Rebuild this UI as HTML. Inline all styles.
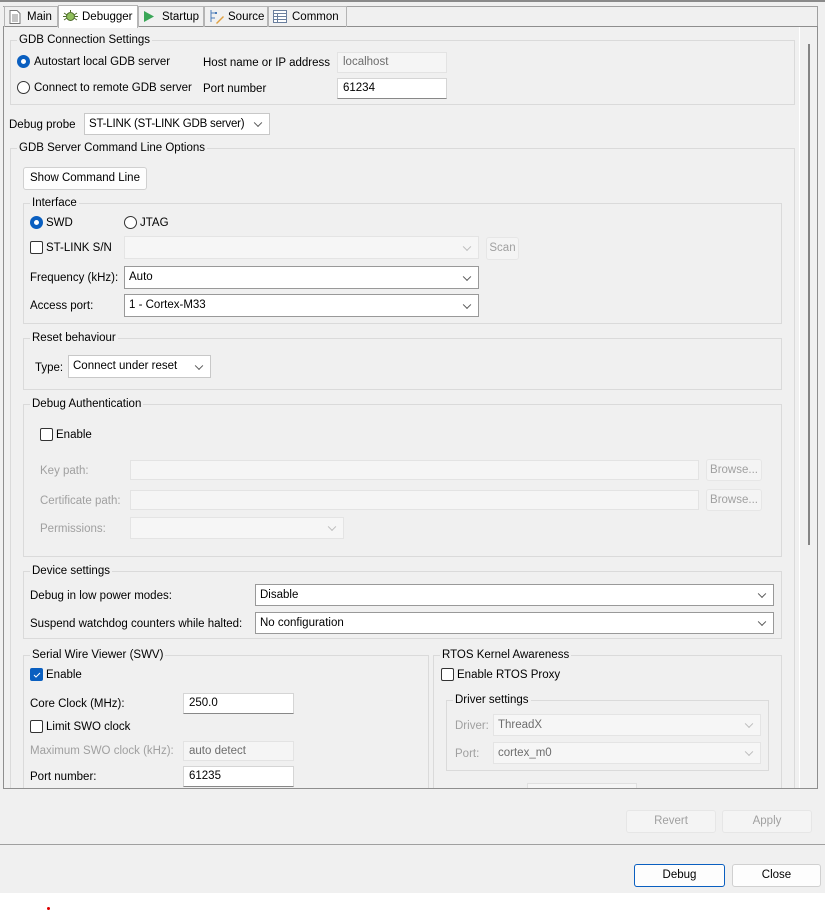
<!DOCTYPE html>
<html><head><meta charset="utf-8"><style>
*{box-sizing:border-box;margin:0;padding:0}
body{width:825px;height:913px;background:#fff;position:relative;overflow:hidden;font-family:"Liberation Sans",sans-serif;font-size:11.5px;color:#000}
.a{position:absolute}
.t{position:absolute;white-space:nowrap;line-height:14px}
.g{position:absolute;border:1px solid #dadada}
.gl{position:absolute;top:-9px;left:6px;background:#f0f0f0;padding:0 2px;line-height:16px;white-space:nowrap}
.in{position:absolute;background:#fff;border:1px solid #d5d5d5;border-bottom:1px solid #888;padding-left:5px;line-height:19px;white-space:nowrap}
.dis{background:#f5f5f5;border:1px solid #e3e3e3;color:#6d6d6d}
.sel{position:absolute;background:#fff;border:1px solid #c8c8c8;padding-left:4px;white-space:nowrap}
.sel:after{content:"";position:absolute;right:8px;top:50%;width:5px;height:5px;border-right:1px solid #555;border-bottom:1px solid #555;transform:translateY(-70%) rotate(45deg)}
.sd{background:#f6f6f6;border-color:#e4e4e4;color:#6d6d6d}
.sd:after{border-color:#bbb}
.btn{position:absolute;background:#fdfdfd;border:1px solid #d0d0d0;border-radius:3px;text-align:center;white-space:nowrap}
.bd{background:#f4f4f4;border-color:#e6e6e6;color:#a0a0a0}
.gray{color:#a0a0a0}
.rad{position:absolute;width:13px;height:13px;border-radius:50%;border:1px solid #333;background:#fff}
.rad.on{background:#fff;border:4px solid #0a5fc0}
.cb{position:absolute;width:13px;height:13px;border:1px solid #333;border-radius:2px;background:#fff}
.cb.on{background:#0a5fc0;border-color:#0a5fc0}
</style></head><body>
<div class="a" style="left:0;top:0;width:825px;height:893px;background:#f0f0f0"></div>
<div class="a" style="left:0;top:0;width:825px;height:2px;background:#8a8a8a"></div>
<div class="a" style="left:3px;top:6px;width:815px;height:21px;border:1px solid #a0a0a0;border-bottom:none;border-left:none"></div>
<div class="a" style="left:3px;top:26px;width:815px;height:763px;border:1px solid #8e8e8e"></div>
<div class="a" style="left:4px;top:6px;width:54px;height:21px;border:1px solid #b5b5b5;border-bottom:none"></div>
<div class="a" style="left:58px;top:5px;width:80px;height:23px;border:1px solid #b5b5b5;border-bottom:none;background:#fff"></div>
<div class="a" style="left:138px;top:6px;width:66px;height:21px;border:1px solid #b5b5b5;border-bottom:none"></div>
<div class="a" style="left:204px;top:6px;width:64px;height:21px;border:1px solid #b5b5b5;border-bottom:none"></div>
<div class="a" style="left:268px;top:6px;width:79px;height:21px;border:1px solid #b5b5b5;border-bottom:none"></div>
<svg class="a" style="left:9px;top:10px" width="12" height="14"><path d="M1 .5h7l3 3v10H1z" fill="#fff" stroke="#777"/><path d="M3 5h6M3 7h6M3 9h6M3 11h6" stroke="#888"/></svg>
<div class="t" style="left:27px;top:10px">Main</div>
<svg class="a" style="left:63px;top:9px" width="15" height="15"><circle cx="7.5" cy="7.5" r="4" fill="#8fbf5a" stroke="#4d6b2a"/><path d="M1 4l3 2M14 4l-3 2M1 11l3-2M14 11l-3-2M7.5 1v2M3 7.5H0M15 7.5h-3" stroke="#4d6b2a"/></svg>
<div class="t" style="left:82px;top:10px">Debugger</div>
<svg class="a" style="left:143px;top:10px" width="12" height="13"><path d="M1 1l10 5.5L1 12z" fill="#3aa657"/></svg>
<div class="t" style="left:162px;top:10px">Startup</div>
<svg class="a" style="left:209px;top:9px" width="16" height="16"><path d="M2 1v12M2 4h4M2 9h4" stroke="#4b7bb8"/><rect x="6" y="3" width="2" height="2" fill="#4b7bb8"/><path d="M7 14l7-7 1 1-7 7z" fill="#e0a040"/></svg>
<div class="t" style="left:228px;top:10px">Source</div>
<svg class="a" style="left:273px;top:10px" width="14" height="13"><rect x=".5" y=".5" width="13" height="12" fill="#fff" stroke="#6a7f9e"/><path d="M1 3.5h12M4.5 3v9M1 6.5h12M1 9.5h12" stroke="#6a7f9e"/></svg>
<div class="t" style="left:292px;top:10px">Common</div>

<div class="a" style="left:799px;top:27px;width:1px;height:761px;background:#fff"></div>
<div class="a" style="left:808px;top:44px;width:2px;height:501px;background:#858585"></div>

<div class="g" style="left:10px;top:40px;width:785px;height:65px"><span class="gl">GDB Connection Settings</span></div>
<div class="rad on" style="left:17px;top:55px"></div><div class="t" style="left:34px;top:55px">Autostart local GDB server</div>
<div class="rad" style="left:17px;top:81px"></div><div class="t" style="left:34px;top:81px">Connect to remote GDB server</div>
<div class="t" style="left:203px;top:56px">Host name or IP address</div>
<div class="t" style="left:203px;top:82px">Port number</div>
<div class="in dis" style="left:337px;top:52px;width:110px;height:21px">localhost</div>
<div class="in" style="left:337px;top:78px;width:110px;height:21px">61234</div>

<div class="t" style="left:9px;top:118px">Debug probe</div>
<div class="sel" style="left:84px;top:113px;width:186px;height:22px;line-height:20px;letter-spacing:-0.2px">ST-LINK (ST-LINK GDB server)</div>

<div class="g" style="left:10px;top:148px;width:785px;height:660px"><span class="gl">GDB Server Command Line Options</span></div>
<div class="btn" style="left:23px;top:167px;width:124px;height:23px;line-height:21px">Show Command Line</div>

<div class="g" style="left:23px;top:203px;width:759px;height:121px"><span class="gl">Interface</span></div>
<div class="rad on" style="left:30px;top:216px"></div><div class="t" style="left:46px;top:216px">SWD</div>
<div class="rad" style="left:124px;top:216px"></div><div class="t" style="left:140px;top:216px">JTAG</div>
<div class="cb" style="left:30px;top:241px"></div><div class="t" style="left:46px;top:241px">ST-LINK S/N</div>
<div class="sel sd" style="left:124px;top:236px;width:355px;height:23px"></div>
<div class="btn bd" style="left:486px;top:237px;width:33px;height:23px;line-height:21px">Scan</div>
<div class="t" style="left:30px;top:271px">Frequency (kHz):</div>
<div class="sel" style="left:124px;top:266px;width:355px;height:23px;line-height:21px;border-color:#999">Auto</div>
<div class="t" style="left:30px;top:299px">Access port:</div>
<div class="sel" style="left:124px;top:294px;width:355px;height:23px;line-height:21px;border-color:#999">1 - Cortex-M33</div>

<div class="g" style="left:23px;top:338px;width:759px;height:52px"><span class="gl">Reset behaviour</span></div>
<div class="t" style="left:35px;top:361px">Type:</div>
<div class="sel" style="left:68px;top:355px;width:143px;height:23px;line-height:21px">Connect under reset</div>

<div class="g" style="left:23px;top:404px;width:759px;height:153px"><span class="gl">Debug Authentication</span></div>
<div class="cb" style="left:40px;top:428px"></div><div class="t" style="left:56px;top:428px">Enable</div>
<div class="t gray" style="left:40px;top:464px">Key path:</div>
<div class="in dis" style="left:130px;top:460px;width:569px;height:20px"></div>
<div class="btn bd" style="left:706px;top:459px;width:56px;height:22px;line-height:20px">Browse...</div>
<div class="t gray" style="left:40px;top:494px">Certificate path:</div>
<div class="in dis" style="left:130px;top:490px;width:569px;height:20px"></div>
<div class="btn bd" style="left:706px;top:489px;width:56px;height:22px;line-height:20px">Browse...</div>
<div class="t gray" style="left:40px;top:522px">Permissions:</div>
<div class="sel sd" style="left:130px;top:517px;width:214px;height:22px"></div>

<div class="g" style="left:23px;top:571px;width:759px;height:68px"><span class="gl">Device settings</span></div>
<div class="t" style="left:30px;top:589px">Debug in low power modes:</div>
<div class="sel" style="left:255px;top:584px;width:519px;height:22px;line-height:20px;border-color:#999">Disable</div>
<div class="t" style="left:30px;top:617px">Suspend watchdog counters while halted:</div>
<div class="sel" style="left:255px;top:612px;width:519px;height:22px;line-height:20px;border-color:#999">No configuration</div>

<div class="g" style="left:23px;top:655px;width:406px;height:140px"><span class="gl">Serial Wire Viewer (SWV)</span></div>
<div class="cb on" style="left:30px;top:668px"></div>
<svg class="a" style="left:31px;top:669px" width="11" height="11"><path d="M3 6l2 2 4-4" stroke="#fff" fill="none"/></svg>
<div class="t" style="left:46px;top:668px">Enable</div>
<div class="t" style="left:30px;top:697px">Core Clock (MHz):</div>
<div class="in" style="left:183px;top:693px;width:111px;height:21px">250.0</div>
<div class="cb" style="left:30px;top:720px"></div><div class="t" style="left:46px;top:720px">Limit SWO clock</div>
<div class="t gray" style="left:30px;top:744px">Maximum SWO clock (kHz):</div>
<div class="in dis" style="left:183px;top:741px;width:111px;height:20px">auto detect</div>
<div class="t" style="left:30px;top:770px">Port number:</div>
<div class="in" style="left:183px;top:766px;width:111px;height:21px">61235</div>

<div class="g" style="left:433px;top:655px;width:349px;height:140px"><span class="gl">RTOS Kernel Awareness</span></div>
<div class="cb" style="left:441px;top:668px"></div><div class="t" style="left:457px;top:668px">Enable RTOS Proxy</div>
<div class="g" style="left:446px;top:700px;width:323px;height:71px"><span class="gl">Driver settings</span></div>
<div class="t gray" style="left:455px;top:719px">Driver:</div>
<div class="sel sd" style="left:493px;top:714px;width:268px;height:22px;line-height:20px">ThreadX</div>
<div class="t gray" style="left:455px;top:747px">Port:</div>
<div class="sel sd" style="left:493px;top:742px;width:268px;height:22px;line-height:20px">cortex_m0</div>
<div class="a" style="left:527px;top:783px;width:110px;height:5px;border:1px solid #e0e0e0;border-bottom:none;background:#f5f5f5"></div>

<div class="a" style="left:0;top:789px;width:825px;height:104px;background:#f0f0f0"></div>
<div class="a" style="left:3px;top:788px;width:815px;height:1px;background:#8e8e8e"></div>
<div class="btn bd" style="left:626px;top:810px;width:90px;height:23px;line-height:21px">Revert</div>
<div class="btn bd" style="left:722px;top:810px;width:90px;height:23px;line-height:21px">Apply</div>
<div class="a" style="left:0;top:844px;width:825px;height:1px;background:#a0a0a0"></div>
<div class="btn" style="left:634px;top:864px;width:91px;height:23px;line-height:20px;border:1px solid #0a5fc0">Debug</div>
<div class="btn" style="left:732px;top:864px;width:89px;height:23px;line-height:21px">Close</div>
<div class="a" style="left:47px;top:907px;width:3px;height:3px;border-radius:50%;background:#d00"></div>
</body></html>
